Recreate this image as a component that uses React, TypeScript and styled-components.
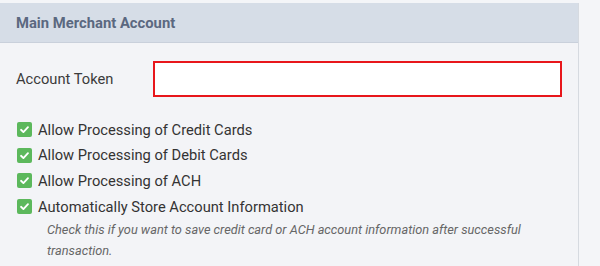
import React from "react";
import styled, { createGlobalStyle } from "styled-components";

const Global = createGlobalStyle`
  html, body { margin: 0; padding: 0; background: #f4f5f8; }
  body { font-family: Roboto, "Liberation Sans", sans-serif; }
`;

const Card = styled.div`
  margin-top: 3px;
  width: 579px;
  border-right: 1px solid #d6dae0;
  background: #f3f4f7;
  height: 263px;
  box-sizing: border-box;
`;

const Header = styled.div`
  height: 40px;
  box-sizing: border-box;
  background: #d6dde7;
  border-bottom: 1px solid #c9d0db;
  display: flex;
  align-items: center;
  padding-left: 16px;
  font-weight: 700;
  font-size: 14.8px;
  color: #5b6880;
`;

const Body = styled.div`
  padding: 18px 0 0 16px;
  display: flex;
  flex-direction: column;
`;

const FieldRow = styled.div`
  display: flex;
  align-items: center;
  height: 36px;
  margin-bottom: 20px;
`;

const Label = styled.label`
  width: 137px;
  font-size: 14.7px;
  color: #3b3b3b;
`;

const Input = styled.input`
  width: 409px;
  height: 36px;
  box-sizing: border-box;
  border: 2px solid #e8161b;
  background: #fff;
  outline: none;
`;

const CheckRow = styled.div`
  display: flex;
  align-items: center;
  height: 25.6px;
  font-size: 14.7px;
  color: #333;
`;

const Box = styled.span`
  width: 15px;
  height: 15px;
  border-radius: 2px;
  background: #5cb85c;
  display: inline-flex;
  align-items: center;
  justify-content: center;
  margin: 0 6px 0 1px;
`;

const Help = styled.div`
  padding-left: 31px;
  font-style: italic;
  font-size: 12.75px;
  line-height: 21px;
  color: #666;
  width: 490px;
`;

const Check = () => (
  <Box>
    <svg width="11" height="11" viewBox="0 0 12 12">
      <path d="M2.2 6.3 L4.8 8.8 L9.8 3.4" fill="none" stroke="#fff" strokeWidth="2" strokeLinecap="round" strokeLinejoin="round" />
    </svg>
  </Box>
);

const items = [
  "Allow Processing of Credit Cards",
  "Allow Processing of Debit Cards",
  "Allow Processing of ACH",
  "Automatically Store Account Information",
];

export default function App() {
  return (
    <>
      <Global />
      <Card>
        <Header>Main Merchant Account</Header>
        <Body>
          <FieldRow>
            <Label>Account Token</Label>
            <Input />
          </FieldRow>
          {items.map((t) => (
            <CheckRow key={t}>
              <Check />
              {t}
            </CheckRow>
          ))}
          <Help>
            Check this if you want to save credit card or ACH account information after successful transaction.
          </Help>
        </Body>
      </Card>
    </>
  );
}
